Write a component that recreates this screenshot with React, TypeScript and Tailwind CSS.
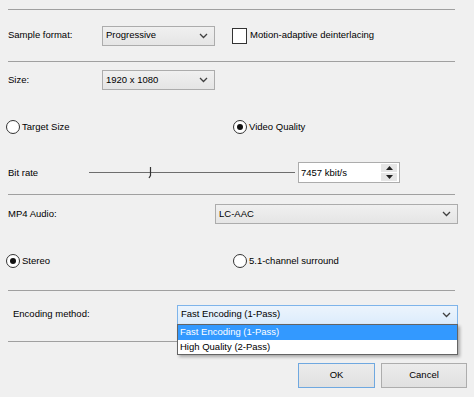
import { ReactNode } from 'react';

function Chevron() {
  return (
    <svg width="9" height="6" viewBox="0 0 9 6" className="flex-none">
      <path d="M1 1 L4.5 4.5 L8 1" fill="none" stroke="#404040" strokeWidth={1.3} />
    </svg>
  );
}

function Select({ value, className, focused }: { value: string; className: string; focused?: boolean }) {
  return (
    <div
      className={`flex h-[20px] flex-none items-center justify-between border pl-[3px] pr-[6px] ${
        focused
          ? 'border-[#7eb4ea] bg-gradient-to-b from-[#ecf4fc] to-[#dcecfc]'
          : 'border-[#acacac] bg-gradient-to-b from-[#f0f0f0] to-[#e5e5e5]'
      } ${className}`}
    >
      <span>{value}</span>
      <Chevron />
    </div>
  );
}

function Radio({ checked, label }: { checked?: boolean; label: string }) {
  return (
    <div className="flex items-center gap-[2px]">
      <span className="flex h-[14px] w-[14px] flex-none items-center justify-center rounded-full border border-[#333] bg-white">
        {checked && <span className="h-[6px] w-[6px] rounded-full bg-[#111]" />}
      </span>
      <span>{label}</span>
    </div>
  );
}

function Sep() {
  return <div className="h-[1px] w-[447px] flex-none border-t border-[#a0a0a0]" />;
}

function Row({ children, className }: { children: ReactNode; className?: string }) {
  return <div className={`flex items-center ${className ?? ''}`}>{children}</div>;
}

export default function App() {
  return (
    <div className="relative h-[397px] w-[474px] overflow-hidden bg-[#f0f0f0] px-[8px] pt-[9px] font-['Liberation_Sans',Arial,sans-serif] text-[9.5px] text-black">
      <div className="flex flex-col">
        <Sep />

        {/* Sample format */}
        <Row className="h-[51px]">
          <span className="w-[94px] flex-none">Sample format:</span>
          <Select value="Progressive" className="w-[113px]" />
          <span className="ml-[17px] h-[16px] w-[15px] flex-none border border-[#333] bg-white" />
          <span className="ml-[3px]">Motion-adaptive deinterlacing</span>
        </Row>

        <Sep />

        {/* Size */}
        <Row className="mt-[8px]">
          <span className="w-[94px] flex-none">Size:</span>
          <Select value="1920 x 1080" className="w-[113px]" />
        </Row>

        <Row className="-ml-[2px] mt-[30px]">
          <div className="w-[227px] flex-none">
            <Radio label="Target Size" />
          </div>
          <Radio checked label="Video Quality" />
        </Row>

        {/* Bit rate */}
        <Row className="mt-[28px] h-[21px]">
          <span className="w-[81px] flex-none">Bit rate</span>
          <div className="relative flex h-[21px] w-[206px] flex-none items-center">
            <div className="h-[2px] w-full border-t border-[#6d6d6d] border-b-white" />
            <svg width="5" height="12" viewBox="0 0 5 12" className="absolute left-[59px] top-[5px]">
              <path d="M2.5 0 V8.5 L1 11" fill="none" stroke="#333" strokeWidth={1.2} />
            </svg>
          </div>
          <div className="ml-[3px] flex h-[21px] w-[102px] flex-none items-center border border-[#acacac] bg-white pl-[2px] pr-[2px]">
            <span className="flex-1">7457 kbit/s</span>
            <div className="flex h-[17px] w-[16px] flex-col gap-[1px]">
              <div className="flex flex-1 items-center justify-center bg-[#e6e6e6]">
                <svg width="7" height="4" viewBox="0 0 7 4">
                  <path d="M0 4 L3.5 0 L7 4 Z" fill="#222" />
                </svg>
              </div>
              <div className="flex flex-1 items-center justify-center bg-[#e6e6e6]">
                <svg width="7" height="4" viewBox="0 0 7 4">
                  <path d="M0 0 L3.5 4 L7 0 Z" fill="#222" />
                </svg>
              </div>
            </div>
          </div>
        </Row>

        <div className="mt-[11px]" />
        <Sep />

        {/* MP4 audio */}
        <Row className="mt-[9px]">
          <span className="w-[207px] flex-none">MP4 Audio:</span>
          <Select value="LC-AAC" className="w-[243px]" />
        </Row>

        <Row className="-ml-[2px] mt-[30px]">
          <div className="w-[227px] flex-none">
            <Radio checked label="Stereo" />
          </div>
          <Radio label="5.1-channel surround" />
        </Row>

        <div className="mt-[21px]" />
        <Sep />

        {/* Encoding method */}
        <Row className="mt-[14px]">
          <span className="w-[169px] flex-none pl-[5px]">Encoding method:</span>
          <Select value="Fast Encoding (1-Pass)" className="w-[281px]" focused />
        </Row>

        <div className="mt-[16px]" />
        <Sep />

        {/* Buttons */}
        <div className="mt-[21px] flex w-[459px] justify-end gap-[6px]">
          <button
            type="button"
            className="h-[25px] w-[77px] border border-[#6fa8e0] bg-gradient-to-b from-[#ececec] to-[#e0e0e0]"
          >
            OK
          </button>
          <button
            type="button"
            className="h-[25px] w-[86px] border border-[#adadad] bg-gradient-to-b from-[#ececec] to-[#e0e0e0]"
          >
            Cancel
          </button>
        </div>
      </div>

      {/* Open dropdown list */}
      <div className="absolute left-[177px] top-[324px] w-[281px] border border-[#646464] bg-white shadow-[2px_2px_3px_rgba(0,0,0,0.3)]">
        <div className="flex h-[15px] items-center bg-[#3399ff] pl-[2px] text-white">Fast Encoding (1-Pass)</div>
        <div className="flex h-[14px] items-center pl-[2px]">High Quality (2-Pass)</div>
      </div>
    </div>
  );
}
